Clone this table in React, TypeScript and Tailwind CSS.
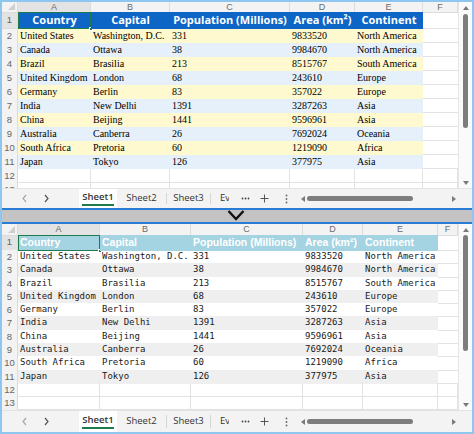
import React from 'react'

const rows = [
  ['United States', 'Washington, D.C.', '331', '9833520', 'North America'],
  ['Canada', 'Ottawa', '38', '9984670', 'North America'],
  ['Brazil', 'Brasilia', '213', '8515767', 'South America'],
  ['United Kingdom', 'London', '68', '243610', 'Europe'],
  ['Germany', 'Berlin', '83', '357022', 'Europe'],
  ['India', 'New Delhi', '1391', '3287263', 'Asia'],
  ['China', 'Beijing', '1441', '9596961', 'Asia'],
  ['Australia', 'Canberra', '26', '7692024', 'Oceania'],
  ['South Africa', 'Pretoria', '60', '1219090', 'Africa'],
  ['Japan', 'Tokyo', '126', '377975', 'Asia'],
]

const headers = ['Country', 'Capital', 'Population (Millions)', 'Area (km²)', 'Continent']
const letters = ['A', 'B', 'C', 'D', 'E', 'F']

const Corner = () => (
  <div className='relative bg-[#f3f3f3] border-r border-b border-[#dcdcdc]'>
    <div className='absolute right-[2px] bottom-[2px] w-0 h-0 border-l-[7px] border-l-transparent border-b-[7px] border-b-[#cfcfcf]' />
  </div>
)

const Selection = () => (
  <>
    <div className='absolute inset-0 border-[1.5px] border-[#1f7a4d] pointer-events-none' />
    <div className='absolute -right-[2px] -bottom-[2px] w-[4px] h-[4px] bg-[#1f7a4d] border border-white' />
  </>
)

const VScroll = ({ thumb, top }: { thumb: string; top: string }) => (
  <div className='w-[14px] flex flex-col items-center bg-[#fafafa] border-l border-[#e6e6e6]'>
    <div className={`${top} flex items-center justify-center`}>
      <div className='w-0 h-0 border-x-[3px] border-x-transparent border-b-[4px] border-b-[#7a7a7a]' />
    </div>
    <div className={`${thumb} w-[5px] rounded-full bg-[#7d7d7d]`} />
    <div className='flex-1' />
    <div className='h-[10px] flex items-center justify-center'>
      <div className='w-0 h-0 border-x-[3px] border-x-transparent border-t-[4px] border-t-[#7a7a7a]' />
    </div>
  </div>
)

const TabBar = ({ h }: { h: string }) => (
  <div className={`${h} flex items-stretch bg-[#f3f3f3] border-t border-[#e3e3e3] text-[9.5px] text-[#333]`} style={{ fontFamily: '"Open Sans", sans-serif' }}>
    <div className='w-[77px] flex items-center pl-[19px] gap-[15px]'>
      <svg width='7' height='9' viewBox='0 0 7 9'><path d='M5 1 L2 4.5 L5 8' stroke='#a8a8a8' strokeWidth='1.2' fill='none' /></svg>
      <svg width='7' height='9' viewBox='0 0 7 9'><path d='M2 1 L5 4.5 L2 8' stroke='#555' strokeWidth='1.2' fill='none' /></svg>
    </div>
    <div className='w-[38px] bg-white flex flex-col items-center justify-center'>
      <span className='font-semibold leading-[12px] border-b-2 border-[#1f7a4d] pb-[1px]'>Sheet1</span>
    </div>
    <div className='w-[50px] flex items-center justify-center border-r border-[#d6d6d6] my-[4px]'>Sheet2</div>
    <div className='w-[44px] flex items-center justify-center border-r border-[#d6d6d6] my-[4px]'>Sheet3</div>
    <div className='w-[25px] pl-[9px] flex items-center overflow-hidden whitespace-nowrap'>
      <span className='w-[9px] overflow-hidden'>Evaluation Warning</span>
    </div>
    <div className='w-[18px] flex items-center justify-center'>
      <svg width='9' height='3' viewBox='0 0 9 3'><circle cx='1.5' cy='1.5' r='0.9' fill='#444' /><circle cx='4.5' cy='1.5' r='0.9' fill='#444' /><circle cx='7.5' cy='1.5' r='0.9' fill='#444' /></svg>
    </div>
    <div className='w-[20px] flex items-center justify-center'>
      <svg width='9' height='9' viewBox='0 0 9 9'><path d='M4.5 0.5 V8.5 M0.5 4.5 H8.5' stroke='#555' strokeWidth='1' /></svg>
    </div>
    <div className='w-[24px] flex items-center justify-center'>
      <svg width='3' height='10' viewBox='0 0 3 10'><circle cx='1.5' cy='1.5' r='0.9' fill='#666' /><circle cx='1.5' cy='5' r='0.9' fill='#666' /><circle cx='1.5' cy='8.5' r='0.9' fill='#666' /></svg>
    </div>
    <div className='flex-1 flex items-center pl-[3px] pr-[16px] gap-[2px]'>
      <div className='w-0 h-0 border-y-[3px] border-y-transparent border-r-[4px] border-r-[#7a7a7a]' />
      <div className='w-[106px] h-[5px] rounded-full bg-[#7d7d7d]' />
      <div className='flex-1' />
      <div className='w-0 h-0 border-y-[3px] border-y-transparent border-l-[4px] border-l-[#7a7a7a]' />
    </div>
  </div>
)

const TopPanel = () => {
  const cols = 'grid grid-cols-[16px_73px_79px_120px_65px_68px_35px]'
  return (
    <div className='h-[206px] flex flex-col bg-white'>
      <div className='h-[186px] flex overflow-hidden'>
        <div className='flex-1 overflow-hidden'>
          <div className={`${cols} h-[10px] text-[9px] text-[#6b6b6b] leading-[10px]`} style={{ fontFamily: '"Liberation Sans", sans-serif' }}>
            <Corner />
            {letters.map((l, i) => (
              <div key={l} className={`text-center border-r border-b border-[#dcdcdc] ${i === 0 ? 'bg-[#e3e3e3]' : 'bg-[#f3f3f3]'}`}>{l}</div>
            ))}
          </div>
          <div className={`${cols} h-[17px]`}>
            <div className='bg-[#e3e3e3] text-[9.5px] text-[#666] flex items-center justify-center border-r border-b border-[#dcdcdc]' style={{ fontFamily: '"Liberation Sans", sans-serif' }}>1</div>
            {headers.map((h, i) => (
              <div key={h} className='relative bg-[#0d66c6] text-white font-bold text-[11px] flex items-center justify-center whitespace-nowrap' style={{ fontFamily: '"Open Sans", sans-serif' }}>
                {h}
                {i === 0 && <Selection />}
              </div>
            ))}
            <div className='border-b border-[#e2e2e2]' />
          </div>
          {rows.map((r, ri) => (
            <div key={ri} className={`${cols} h-[14px]`}>
              <div className='bg-[#f3f3f3] text-[9.5px] text-[#666] flex items-center justify-center border-r border-[#dcdcdc]' style={{ fontFamily: '"Liberation Sans", sans-serif' }}>{ri + 2}</div>
              {r.map((c, ci) => (
                <div key={ci} className={`${ri % 2 === 0 ? 'bg-[#fff9cf]' : 'bg-[#e5f0fa]'} text-[10px] text-black pl-[2px] leading-[14px] whitespace-nowrap`} style={{ fontFamily: '"Liberation Serif", serif' }}>{c}</div>
              ))}
              <div className='border-b border-[#e2e2e2]' />
            </div>
          ))}
          {[12, 13].map((n) => (
            <div key={n} className={`${cols} h-[14px]`}>
              <div className='bg-[#f3f3f3] text-[9.5px] text-[#666] flex items-center justify-center border-r border-[#dcdcdc]' style={{ fontFamily: '"Liberation Sans", sans-serif' }}>{n}</div>
              {letters.map((l) => (
                <div key={l} className='border-r border-b border-[#e2e2e2]' />
              ))}
            </div>
          ))}
        </div>
        <VScroll top='h-[12px]' thumb='h-[114px]' />
      </div>
      <TabBar h='h-[20px]' />
    </div>
  )
}

const BottomPanel = () => {
  const cols = 'grid grid-cols-[16px_82px_91px_112px_60px_75px_20px]'
  return (
    <div className='h-[208px] flex flex-col bg-white'>
      <div className='h-[186px] flex overflow-hidden'>
        <div className='flex-1 overflow-hidden'>
          <div className={`${cols} h-[11px] text-[9px] text-[#6b6b6b] leading-[11px]`} style={{ fontFamily: '"Liberation Sans", sans-serif' }}>
            <Corner />
            {letters.map((l, i) => (
              <div key={l} className={`text-center border-r border-b border-[#dcdcdc] ${i === 0 ? 'bg-[#e3e3e3]' : 'bg-[#f3f3f3]'}`}>{l}</div>
            ))}
          </div>
          <div className={`${cols} h-[15px]`}>
            <div className='bg-[#e3e3e3] text-[9.5px] text-[#666] flex items-center justify-center border-r border-b border-[#dcdcdc]' style={{ fontFamily: '"Liberation Sans", sans-serif' }}>1</div>
            {headers.map((h, i) => (
              <div key={h} className='relative bg-[#a4d3e2] text-white font-bold text-[10.5px] flex items-center pl-[2px] whitespace-nowrap' style={{ fontFamily: '"Liberation Sans", sans-serif' }}>
                {h}
                {i === 0 && <Selection />}
              </div>
            ))}
            <div className='border-b border-[#e2e2e2]' />
          </div>
          {rows.map((r, ri) => (
            <div key={ri} className={`${cols} h-[13.3px]`}>
              <div className='bg-[#f3f3f3] text-[9.5px] text-[#666] flex items-center justify-center border-r border-[#dcdcdc]' style={{ fontFamily: '"Liberation Sans", sans-serif' }}>{ri + 2}</div>
              {r.map((c, ci) => (
                <div key={ci} className={`${ri % 2 === 0 ? 'bg-white' : 'bg-[#efefef]'} text-[9px] text-[#1a1a1a] pl-[2px] leading-[13.3px] whitespace-nowrap`} style={{ fontFamily: '"DejaVu Sans Mono", monospace' }}>{c}</div>
              ))}
              <div className='border-b border-[#e2e2e2]' />
            </div>
          ))}
          {[12, 13, 14].map((n) => (
            <div key={n} className={`${cols} h-[13px]`}>
              <div className='bg-[#f3f3f3] text-[9.5px] text-[#666] flex items-center justify-center border-r border-[#dcdcdc]' style={{ fontFamily: '"Liberation Sans", sans-serif' }}>{n}</div>
              {letters.map((l) => (
                <div key={l} className='border-r border-b border-[#e2e2e2]' />
              ))}
            </div>
          ))}
        </div>
        <VScroll top='h-[11px]' thumb='h-[116px]' />
      </div>
      <TabBar h='h-[22px]' />
    </div>
  )
}

export default function App() {
  return (
    <div className='w-[474px] h-[434px] border-2 border-[#8fc6ef] flex flex-col overflow-hidden bg-white'>
      <TopPanel />
      <div className='h-[16px] border-y-2 border-[#2a7bd3] bg-[#c3c3c3] flex justify-center'>
        <svg width='18' height='12' viewBox='0 0 18 12' className='ml-[-2px]'>
          <path d='M1.5 1 L9 9 L16.5 1' stroke='#111' strokeWidth='2.4' fill='none' />
        </svg>
      </div>
      <BottomPanel />
    </div>
  )
}
